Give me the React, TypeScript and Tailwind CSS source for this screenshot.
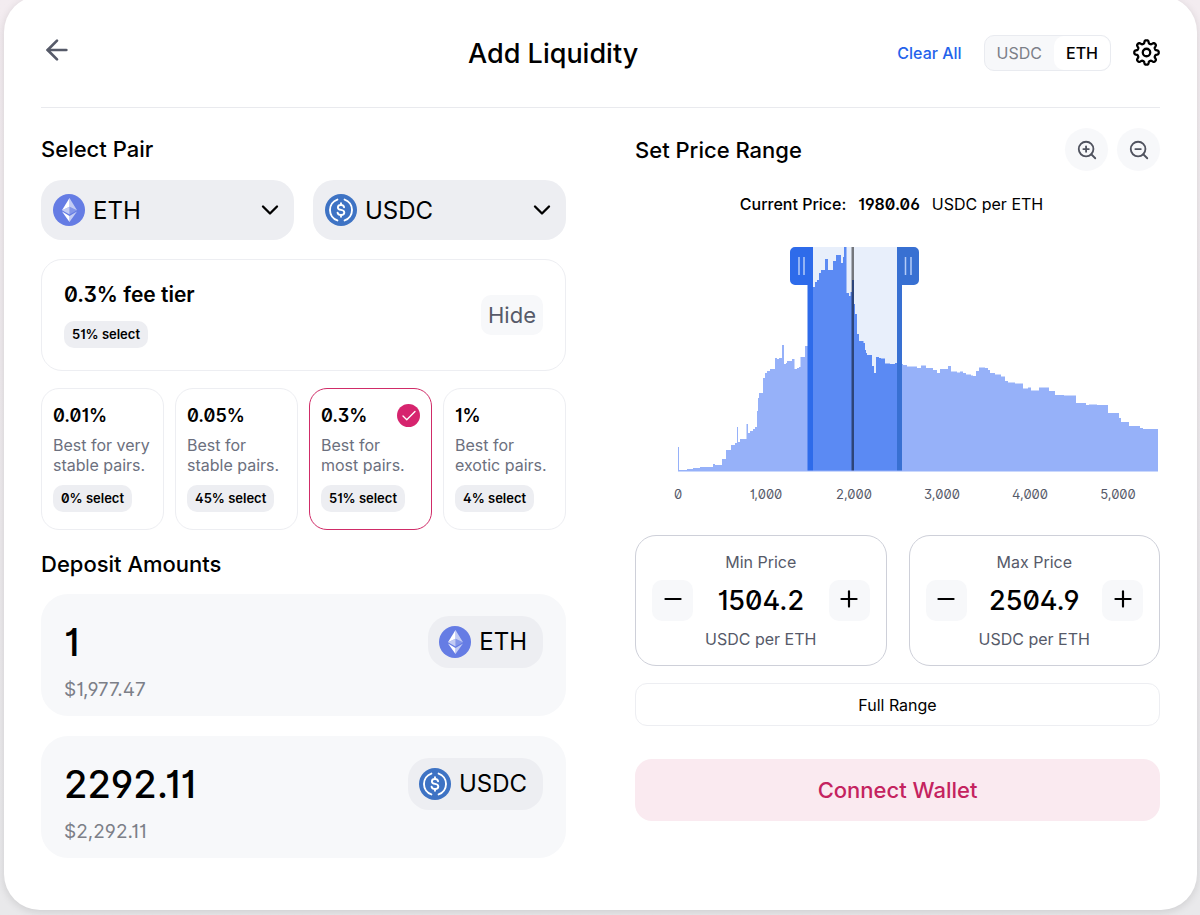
import { useState } from "react";
import type { ReactNode } from "react";
import { ArrowLeft, Check, ChevronDown, Minus, Plus, ZoomIn, ZoomOut } from "lucide-react";

type Token = "ETH" | "USDC";

const FEE_TIERS = [
  { fee: "0.01%", description: "Best for very stable pairs.", share: "0% select" },
  { fee: "0.05%", description: "Best for stable pairs.", share: "45% select" },
  { fee: "0.3%", description: "Best for most pairs.", share: "51% select" },
  { fee: "1%", description: "Best for exotic pairs.", share: "4% select" },
];

const CHART_WIDTH = 480;
const CHART_HEIGHT = 224;

// [x, height] of every step in the liquidity curve
const LIQUIDITY = [
  [0, 24], [1, 1], [9, 2], [15, 3], [22, 4], [35, 7], [37, 6], [44, 12], [48, 21], [53, 26],
  [57, 28], [59, 44], [60, 29], [62, 32], [68.5, 47], [70, 38], [72, 40], [75, 42], [77, 44],
  [79, 60], [80, 73], [81, 78], [85, 93], [87, 98], [89, 100], [92, 102], [97, 113], [99, 112],
  [101, 113], [104, 126], [106, 107], [108, 108], [109, 110], [114, 112], [116.5, 102],
  [119, 103], [121, 104], [122.5, 114], [127, 125], [133, 184], [137, 189], [139, 191],
  [141, 198], [143, 201], [147, 212], [150, 201], [155, 210], [158, 216], [163, 208],
  [165, 214], [166, 224], [168.5, 178], [171, 175], [172.5, 179], [174, 191], [176, 167],
  [177, 157], [179, 137], [181, 130], [185.5, 128], [187, 121], [188, 118], [189, 116],
  [194, 105], [196, 98], [198, 114], [201, 113], [203, 112.5], [207, 107.5], [212, 107],
  [217, 108], [222, 107], [225, 106], [229, 104.5], [239, 103], [243, 105.5], [248, 103],
  [255, 101], [259, 98], [262, 102], [270, 105], [273, 99.5], [279, 98.5], [282, 99.5],
  [285, 98], [288, 96.5], [293, 95.5], [295, 95], [298, 100], [301, 103.5], [307, 103],
  [310, 101], [312, 98], [317, 96.5], [323, 94.5], [327, 90], [330, 88.5], [337, 87.5],
  [345, 82.5], [350, 83.5], [353, 80.5], [361, 83.5], [371, 80], [377, 76], [386, 75.5],
  [398, 68], [408, 66], [411, 66.5], [419, 66], [430, 58], [441, 53], [443, 49], [451, 45],
  [462, 43], [465, 42],
];

const areaPath =
  `M0 ${CHART_HEIGHT}` +
  LIQUIDITY.map(([x, h]) => `H${x}V${CHART_HEIGHT - h}`).join("") +
  `H${CHART_WIDTH}V${CHART_HEIGHT}Z`;

const TICKS = [
  { x: 0, label: "0" },
  { x: 88, label: "1,000" },
  { x: 176, label: "2,000" },
  { x: 264, label: "3,000" },
  { x: 352, label: "4,000" },
  { x: 440, label: "5,000" },
];

// eight soft teeth around the hub
const gearPath =
  Array.from({ length: 160 }, (_, i) => {
    const angle = (i / 160) * Math.PI * 2;
    const wave = Math.tanh(2 * Math.cos(8 * angle));
    const r = 10.3 + 1.5 * wave;
    return `${i ? "L" : "M"}${(14 + r * Math.cos(angle)).toFixed(2)} ${(14 + r * Math.sin(angle)).toFixed(2)}`;
  }).join("") + "Z";

const GearIcon = () => (
  <svg viewBox="1 1 26 26" className="size-[27px]" fill="none" stroke="currentColor" strokeWidth="2.2" strokeLinejoin="round">
    <path d={gearPath} />
    <circle cx="14" cy="14" r="3.6" />
  </svg>
);

const EthIcon = () => (
  <svg viewBox="0 0 32 32" className="size-8 shrink-0" fill="#fff">
    <circle cx="16" cy="16" r="16" fill="#657ce4" />
    <path fillOpacity=".602" d="M16.5 4v8.87l7.5 3.35z" />
    <path d="M16.5 4L9 16.22l7.5-3.35z" />
    <path fillOpacity=".602" d="M16.5 21.97V28L24 17.62z" />
    <path d="M16.5 28v-6.03L9 17.62z" />
    <path fillOpacity=".2" d="M16.5 20.57l7.5-4.35-7.5-3.35z" />
    <path fillOpacity=".602" d="M9 16.22l7.5 4.35v-7.7z" />
  </svg>
);

const UsdcIcon = () => (
  <svg viewBox="0 0 32 32" className="size-8 shrink-0" fill="none" stroke="#fff" strokeWidth="1.9" strokeLinecap="round">
    <circle cx="16" cy="16" r="16" fill="#3e73c4" stroke="none" />
    <path d="M12.4 5.6a11 11 0 0 0 0 20.8M19.6 5.6a11 11 0 0 1 0 20.8" />
    <path d="M19.1 13.2C18.8 11.8 17.6 11 16 11C14.2 11 12.9 11.9 12.9 13.4C12.9 15.1 14.300 15.600 16 15.900C17.900 16.200 19.300 16.800 19.300 18.500C19.300 20.100 17.900 21 16 21C14.200 21 12.900 20.200 12.600 18.700" />
    <path d="M16 9.2V10.800M16 21.200V22.800" />
  </svg>
);

const TokenIcon = ({ token }: { token: Token }) => (token === "ETH" ? <EthIcon /> : <UsdcIcon />);

const SectionTitle = ({ children }: { children: ReactNode }) => (
  <h2 className="text-[22px] leading-7 font-medium">{children}</h2>
);

const Chip = ({ children }: { children: ReactNode }) => (
  <span className="inline-block rounded-[10px] bg-[#edeef2] px-2 text-[13px] leading-[27px] font-semibold whitespace-nowrap text-black">
    {children}
  </span>
);

const TokenSelect = ({ label, initial }: { label: string; initial: Token }) => {
  const [token, setToken] = useState<Token>(initial);

  return (
    <div className="relative flex h-15 flex-1 items-center rounded-[21px] bg-[#edeef2] pl-3">
      <TokenIcon token={token} />
      <select
        aria-label={label}
        value={token}
        onChange={(e) => setToken(e.target.value as Token)}
        className="h-full min-w-0 flex-1 appearance-none pt-0.5 pl-2 text-2xl outline-none"
      >
        <option>ETH</option>
        <option>USDC</option>
      </select>
      <ChevronDown className="pointer-events-none absolute right-2.5 size-7" strokeWidth={2} />
    </div>
  );
};

const DepositCard = ({ token, initial, fiat }: { token: Token; initial: string; fiat: string }) => {
  const [amount, setAmount] = useState(initial);

  return (
    <div className="rounded-[27px] bg-[#f7f8fa] px-[23px] pt-[22px] pb-4">
      <div className="flex items-center justify-between gap-4">
        <input
          aria-label={`${token} amount`}
          value={amount}
          onChange={(e) => setAmount(e.target.value)}
          className="h-13 w-0 min-w-0 flex-1 bg-transparent text-[38px] font-medium outline-none"
        />
        <div className="flex h-13 items-center gap-2 rounded-[21px] bg-[#edeef2] pr-4 pl-[11px] text-2xl">
          <TokenIcon token={token} />
          {token}
        </div>
      </div>
      <p className="mt-3 text-[19px] leading-5 text-[#7c7f88]">{fiat}</p>
    </div>
  );
};

const PriceCard = ({ label, initial }: { label: string; initial: number }) => {
  const [price, setPrice] = useState(initial);
  const step = (delta: number) => setPrice((p) => Math.round((p + delta) * 10) / 10);

  return (
    <div className="min-w-0 flex-1 rounded-[21px] border border-[#ced0d9] px-4 py-4 text-center text-base leading-5 text-[#565a69]">
      <p>{label}</p>
      <div className="my-2 flex items-center justify-between">
        <button
          aria-label={`Decrease ${label}`}
          onClick={() => step(-1)}
          className="flex size-[41px] shrink-0 items-center justify-center rounded-[10px] bg-[#f7f8fa] pb-1 text-black"
        >
          <Minus className="size-[26px]" strokeWidth={2} />
        </button>
        <input
          aria-label={label}
          value={price}
          onChange={(e) => setPrice(Number(e.target.value) || 0)}
          className="w-0 min-w-0 flex-1 text-center text-[27px] leading-10 font-medium text-black outline-none"
        />
        <button
          aria-label={`Increase ${label}`}
          onClick={() => step(1)}
          className="flex size-[41px] shrink-0 items-center justify-center rounded-[10px] bg-[#f7f8fa] pb-1 text-black"
        >
          <Plus className="size-[26px]" strokeWidth={2} />
        </button>
      </div>
      <p>USDC per ETH</p>
    </div>
  );
};

const LiquidityChart = () => (
  <svg viewBox="0 0 525 258" className="mt-[33px] w-full" role="img" aria-label="Liquidity by price">
    <defs>
      <clipPath id="range">
        <rect x="132" y="0" width="90" height={CHART_HEIGHT} />
      </clipPath>
    </defs>
    <g transform="translate(43 0)">
      <path d={areaPath} fill="#96b1f9" />
      <g clipPath="url(#range)">
        <rect x="132" y="0" width="90" height={CHART_HEIGHT} fill="#e8effb" />
        <path d={areaPath} fill="#5b8af3" />
      </g>
      <rect x="173.5" y="0" width="2.5" height={CHART_HEIGHT} fill="#000" fillOpacity="0.5" />
      <path d="M135 0H117a5 5 0 0 0-5 5V33a5 5 0 0 0 5 5H129.5V224H135Z" fill="#2e6bea" />
      <path d="M219 0H236a5 5 0 0 1 5 5V33a5 5 0 0 1-5 5H224V224H219Z" fill="#3870d2" />
      <path d="M121 10V28M126 10V28M227.5 10V28M233 10V28" stroke="#b4cbf8" strokeWidth="1.5" />
      <path d={`M0 ${CHART_HEIGHT}H${CHART_WIDTH}`} stroke="#96b1f9" strokeWidth="1" />
      {TICKS.map(({ x, label }) => (
        <text key={label} x={x} y="252" textAnchor="middle" fontSize="13" fill="#565a69">
          {label}
        </text>
      ))}
    </g>
  </svg>
);

export default function App() {
  const [base, setBase] = useState<Token>("ETH");
  const [tier, setTier] = useState("0.3%");
  const [showTiers, setShowTiers] = useState(true);

  return (
    <div className="flow-root min-h-screen bg-linear-to-b from-[#f3ecf0] to-[#e9e9eb] font-['Inter',sans-serif] text-black [font-feature-settings:'zero','ss01','cv01']">
      <main className="-mt-1 mr-[3px] mb-[5px] ml-1 rounded-[36px] bg-white px-[37px] pb-13 shadow-[0_2px_8px_rgba(0,0,0,0.12)]">
        <header className="flex h-28 items-center border-b border-[#e9eaee] pt-1">
          <div className="w-42 pb-2">
            <button aria-label="Back" className="block text-[#565a69]">
              <ArrowLeft className="size-8" strokeWidth={2} />
            </button>
          </div>
          <h1 className="flex-1 text-center text-[27px] leading-8 font-medium">Add Liquidity</h1>
          <div className="flex items-center gap-[22px] pb-0.5">
            <button className="text-base font-medium text-[#2462eb]">Clear All</button>
            <div className="flex h-9 items-center rounded-[10px] border border-[#e9ebf0] bg-[#f7f8fa] text-base">
              {(["USDC", "ETH"] as Token[]).map((token) => (
                <button
                  key={token}
                  aria-pressed={base === token}
                  onClick={() => setBase(token)}
                  className={
                    base === token
                      ? "h-full rounded-[10px] bg-white px-3 font-medium text-black"
                      : "h-full rounded-[10px] px-3 text-[#7c7f88]"
                  }
                >
                  {token}
                </button>
              ))}
            </div>
            <button aria-label="Settings">
              <GearIcon />
            </button>
          </div>
        </header>

        <div className="grid grid-cols-2 gap-[69px] pt-5">
          <section>
            <div className="flex h-[42px] items-center">
              <SectionTitle>Select Pair</SectionTitle>
            </div>
            <div className="mt-2.5 flex gap-[19px]">
              <TokenSelect label="First token" initial="ETH" />
              <TokenSelect label="Second token" initial="USDC" />
            </div>

            <div className="mt-[19px] flex h-28 items-center justify-between rounded-[21px] border border-[#edeef2] px-[22px]">
              <div>
                <p className="mb-3.5 text-[21px] leading-6 font-semibold">{tier} fee tier</p>
                <Chip>{FEE_TIERS.find((t) => t.fee === tier)?.share}</Chip>
              </div>
              <button
                onClick={() => setShowTiers(!showTiers)}
                className="h-10 rounded-[10px] bg-[#f7f8fa] px-[7px] text-[22px] text-[#565a69]"
              >
                {showTiers ? "Hide" : "Edit"}
              </button>
            </div>

            {showTiers && (
              <div className="mt-[17px] grid grid-cols-4 gap-[11px]">
                {FEE_TIERS.map(({ fee, description, share }) => (
                  <button
                    key={fee}
                    aria-pressed={tier === fee}
                    onClick={() => setTier(fee)}
                    className={
                      tier === fee
                        ? "rounded-[18px] border border-[#d02c68] px-[11px] pt-[15px] pb-[17px] text-left"
                        : "rounded-[18px] border border-[#edeef2] px-[11px] pt-[15px] pb-[17px] text-left"
                    }
                  >
                    <span className="flex h-[23px] items-center justify-between text-lg font-semibold">
                      {fee}
                      {tier === fee && (
                        <span className="flex size-[23px] items-center justify-center rounded-full bg-[#d6246e] text-white">
                          <Check className="size-[18px]" strokeWidth={1.8} />
                        </span>
                      )}
                    </span>
                    <span className="mt-2 mb-2.5 block text-base leading-5 text-[#6c707e]">{description}</span>
                    <Chip>{share}</Chip>
                  </button>
                ))}
              </div>
            )}

            <div className="mt-5 mb-4">
              <SectionTitle>Deposit Amounts</SectionTitle>
            </div>
            <div className="flex flex-col gap-5">
              <DepositCard token="ETH" initial="1" fiat="$1,977.47" />
              <DepositCard token="USDC" initial="2292.11" fiat="$2,292.11" />
            </div>
          </section>

          <section>
            <div className="flex h-[43px] items-center justify-between">
              <SectionTitle>Set Price Range</SectionTitle>
              <div className="flex gap-[9px] text-[#50535f]">
                <button aria-label="Zoom in" className="flex size-[43px] items-center justify-center rounded-full bg-[#f7f8fa]">
                  <ZoomIn className="size-[22px]" strokeWidth={2} />
                </button>
                <button aria-label="Zoom out" className="flex size-[43px] items-center justify-center rounded-full bg-[#f7f8fa]">
                  <ZoomOut className="size-[22px]" strokeWidth={2} />
                </button>
              </div>
            </div>

            <p className="mt-[23px] flex justify-center gap-3 pr-3 text-base leading-5">
              <span className="font-medium">Current Price:</span>
              <span className="font-semibold">1980.06</span>
              <span>USDC per ETH</span>
            </p>

            <LiquidityChart />

            <div className="mt-[30px] flex gap-[22px]">
              <PriceCard label="Min Price" initial={1504.2} />
              <PriceCard label="Max Price" initial={2504.9} />
            </div>
            <button className="mt-[17px] h-[43px] w-full rounded-xl border border-[#edeef2] text-base">Full Range</button>
            <button className="mt-[33px] h-[62px] w-full rounded-[17px] bg-[#faeaf0] text-[22px] font-medium text-[#c4235f]">
              Connect Wallet
            </button>
          </section>
        </div>
      </main>
    </div>
  );
}
